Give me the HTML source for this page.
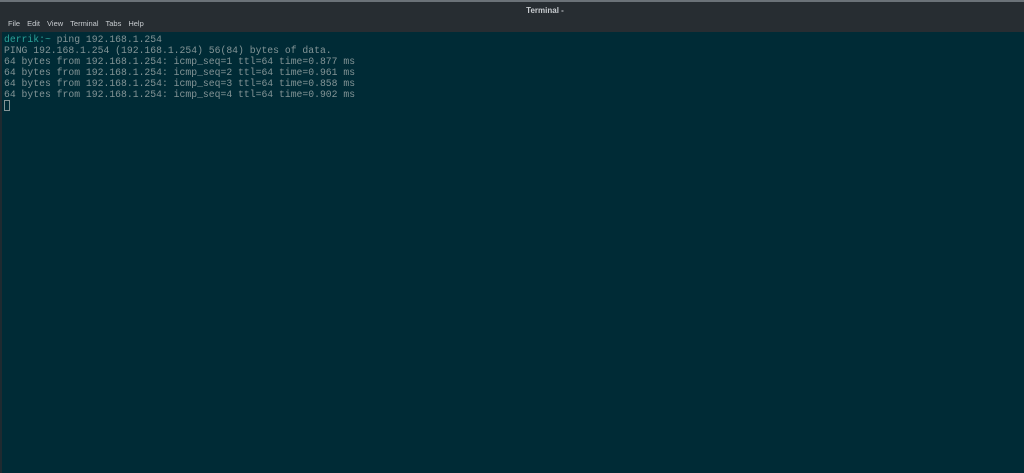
<!DOCTYPE html>
<html><head><style>
html,body{margin:0;padding:0;width:1024px;height:473px;overflow:hidden;background:#002b36}
.top{position:absolute;left:0;top:0;width:1024px;height:2px;background:#6b7278}
.bar{position:absolute;left:0;top:2px;width:1024px;height:30px;background:#272d32}
.title{position:absolute;top:4px;left:0;width:1090px;text-align:center;font:bold 8px "Liberation Sans",sans-serif;color:#c8ccd0}
.menu{position:absolute;top:17px;left:8px;font:7.5px "Liberation Sans",sans-serif;color:#c8ccd0;white-space:pre}
.menu span{margin-right:7px}
.term{position:absolute;left:4px;top:33.5px;font:9.75px/11px "Liberation Mono",monospace;color:#839496;white-space:pre}
.p{color:#2aa198}
.cur{display:inline-block;width:6px;height:11px;border:1px solid #839496;box-sizing:border-box;vertical-align:-2px}
.lb{position:absolute;left:0;top:32px;width:2px;height:441px;background:#1f2a30}
</style></head><body>
<div class="top"></div>
<div class="bar"><div class="title">Terminal -</div>
<div class="menu"><span>File</span><span>Edit</span><span>View</span><span>Terminal</span><span>Tabs</span><span>Help</span></div></div>
<div class="lb"></div>
<div class="term"><span class="p">derrik:~</span> ping 192.168.1.254
PING 192.168.1.254 (192.168.1.254) 56(84) bytes of data.
64 bytes from 192.168.1.254: icmp_seq=1 ttl=64 time=0.877 ms
64 bytes from 192.168.1.254: icmp_seq=2 ttl=64 time=0.961 ms
64 bytes from 192.168.1.254: icmp_seq=3 ttl=64 time=0.858 ms
64 bytes from 192.168.1.254: icmp_seq=4 ttl=64 time=0.902 ms
<span class="cur"></span></div>
</body></html>
